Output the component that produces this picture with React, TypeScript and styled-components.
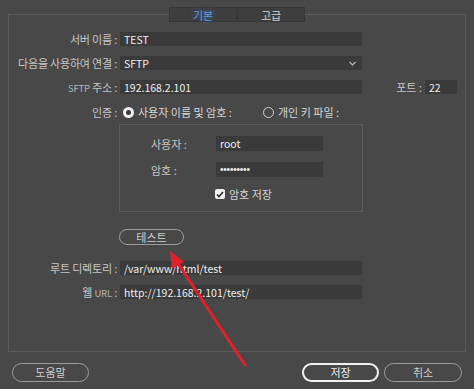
import styled, { createGlobalStyle } from 'styled-components'

const GlobalStyle = createGlobalStyle`
  html, body {
    margin: 0;
    padding: 0;
    background: #484848;
  }
  body {
    width: 474px;
    height: 389px;
    overflow: hidden;
    font-family: "Noto Sans CJK KR", "Noto Sans", sans-serif;
  }
`

const Dialog = styled.div`
  position: relative;
  width: 474px;
  height: 389px;
  box-sizing: border-box;
  padding: 14px 8px 0;
  color: #cbcbcb;
  font-size: 11px;
`

const Panel = styled.div`
  box-sizing: border-box;
  height: 338px;
  border: 1px solid #5c5c5c;
  display: flex;
  flex-direction: column;
`

const TabBar = styled.div`
  display: flex;
  justify-content: center;
  margin-top: -8px;
`

const Tab = styled.div<{ $active?: boolean }>`
  box-sizing: border-box;
  width: 68px;
  height: 15px;
  background: #3e3e3e;
  border: 1px solid #363636;
  display: flex;
  align-items: center;
  justify-content: center;
  font-size: 11px;
  color: ${p => (p.$active ? '#5b9be0' : '#d4d4d4')};
  text-shadow: ${p => (p.$active ? '0 0 6px rgba(70,140,230,0.7)' : 'none')};
`

const Row = styled.div<{ $mt: number }>`
  display: flex;
  align-items: center;
  height: 14px;
  margin-top: ${p => p.$mt}px;
`

const Label = styled.label`
  width: 108px;
  margin-right: 3px;
  text-align: right;
  white-space: nowrap;
  color: #c6c6c6;
  letter-spacing: -0.2px;
`

const Small = styled.span`
  font-size: 9.5px;
  color: #b4b4b4;
`

const Field = styled.input<{ $w?: number }>`
  box-sizing: border-box;
  width: ${p => p.$w ?? 242}px;
  height: 100%;
  border: none;
  outline: none;
  background: #3a3a3a;
  color: #efefef;
  font: inherit;
  font-size: 10.5px;
  padding: 0 4px;
`

const SelectBox = styled.div`
  box-sizing: border-box;
  width: 242px;
  height: 100%;
  background: #3a3a3a;
  color: #efefef;
  font-size: 10.5px;
  padding: 0 6px 0 4px;
  display: flex;
  align-items: center;
  justify-content: space-between;
`

const PortLabel = styled.label`
  margin-left: auto;
  margin-right: 3px;
  color: #c6c6c6;
`

const RadioGroup = styled.div`
  display: flex;
  align-items: center;
  margin-left: 3px;
`

const Option = styled.div<{ $w?: number }>`
  display: flex;
  align-items: center;
  gap: 4px;
  width: ${p => (p.$w ? `${p.$w}px` : 'auto')};
  color: #d6d6d6;
  white-space: nowrap;
`

const Radio = styled.span<{ $checked?: boolean }>`
  box-sizing: border-box;
  width: 11px;
  height: 11px;
  border-radius: 50%;
  border: ${p => (p.$checked ? '3px solid #f2f2f2' : '1px solid #cfcfcf')};
  background: ${p => (p.$checked ? '#3a3a3a' : 'transparent')};
`

const InnerBox = styled.div`
  box-sizing: border-box;
  width: 244px;
  height: 88px;
  margin: 5px 0 0 110px;
  border: 1px solid #5a5a5a;
  display: flex;
  flex-direction: column;
  padding-top: 11px;
`

const InnerRow = styled.div<{ $mt?: number }>`
  display: flex;
  align-items: center;
  height: 15px;
  padding-left: 31px;
  margin-top: ${p => p.$mt ?? 0}px;
`

const InnerLabel = styled.label`
  width: 65px;
  color: #c6c6c6;
`

const Dots = styled.div`
  box-sizing: border-box;
  width: 107px;
  height: 100%;
  background: #3a3a3a;
  color: #f2f2f2;
  font-family: "Liberation Sans", sans-serif;
  font-size: 10px;
  letter-spacing: -0.2px;
  padding-left: 4px;
  display: flex;
  align-items: center;
`

const CheckRow = styled.div`
  display: flex;
  align-items: center;
  gap: 4px;
  height: 12px;
  margin: 11px 0 0 95px;
  color: #d6d6d6;
`

const CheckBox = styled.span`
  width: 10px;
  height: 10px;
  border-radius: 2px;
  background: #f0f0f0;
  display: flex;
  align-items: center;
  justify-content: center;
`

const Pill = styled.button<{ $primary?: boolean; $w?: number; $h?: number }>`
  box-sizing: border-box;
  width: ${p => p.$w ?? 77}px;
  height: ${p => p.$h ?? 19}px;
  padding: 0;
  background: transparent;
  border: ${p => (p.$primary ? '2px solid #f0f0f0' : '1.5px solid #9c9c9c')};
  border-radius: 10px;
  color: ${p => (p.$primary ? '#f0f0f0' : '#cfcfcf')};
  font: inherit;
  font-size: 11px;
  line-height: 1;
`

const TestPill = styled(Pill)`
  margin: 17px 0 0 110px;
`

const Footer = styled.div`
  display: flex;
  justify-content: space-between;
  padding: 11px 4px 0;
`

const FooterRight = styled.div`
  display: flex;
  gap: 5px;
`

const ArrowLayer = styled.svg`
  position: absolute;
  left: 0;
  top: 0;
  pointer-events: none;
`

export default function App() {
  return (
    <>
      <GlobalStyle />
      <Dialog>
        <Panel>
          <TabBar>
            <Tab $active>기본</Tab>
            <Tab>고급</Tab>
          </TabBar>

          <Row $mt={10}>
            <Label>서버 이름 :</Label>
            <Field readOnly value="TEST" />
          </Row>
          <Row $mt={10}>
            <Label>다음을 사용하여 연결 :</Label>
            <SelectBox>
              <span>SFTP</span>
              <svg width="7" height="5" viewBox="0 0 7 5">
                <polyline points="0.5,1 3.5,4 6.5,1" fill="none" stroke="#bdbdbd" strokeWidth="1.2" />
              </svg>
            </SelectBox>
          </Row>
          <Row $mt={10}>
            <Label>
              <Small>SFTP</Small> 주소 :
            </Label>
            <Field readOnly value="192.168.2.101" />
            <PortLabel>포트 :</PortLabel>
            <Field $w={32} readOnly value="22" style={{ marginRight: 8 }} />
          </Row>

          <Row $mt={11}>
            <Label>인증 :</Label>
            <RadioGroup>
              <Option $w={140}>
                <Radio $checked />
                사용자 이름 및 암호 :
              </Option>
              <Option>
                <Radio />
                개인 키 파일 :
              </Option>
            </RadioGroup>
          </Row>

          <InnerBox>
            <InnerRow>
              <InnerLabel>사용자 :</InnerLabel>
              <Field $w={107} readOnly value="root" />
            </InnerRow>
            <InnerRow $mt={11}>
              <InnerLabel>암호 :</InnerLabel>
              <Dots>•••••••••</Dots>
            </InnerRow>
            <CheckRow>
              <CheckBox>
                <svg width="8" height="7" viewBox="0 0 8 7">
                  <polyline points="1,3.5 3,5.5 7,1" fill="none" stroke="#2e2e2e" strokeWidth="1.6" />
                </svg>
              </CheckBox>
              암호 저장
            </CheckRow>
          </InnerBox>

          <TestPill $w={65} $h={16}>테스트</TestPill>

          <Row $mt={16}>
            <Label>루트 디렉토리 :</Label>
            <Field readOnly value="/var/www/html/test" />
          </Row>
          <Row $mt={10}>
            <Label>
              웹 <Small>URL</Small> :
            </Label>
            <Field readOnly value="http://192.168.2.101/test/" />
          </Row>
        </Panel>

        <Footer>
          <Pill>도움말</Pill>
          <FooterRight>
            <Pill $primary>저장</Pill>
            <Pill $w={78}>취소</Pill>
          </FooterRight>
        </Footer>

        <ArrowLayer width="474" height="389" viewBox="0 0 474 389">
          <line x1="245" y1="365" x2="177" y2="262" stroke="#e3202b" strokeWidth="3" strokeLinecap="round" />
          <polygon points="170,251 184,262 172,269" fill="#e3202b" />
        </ArrowLayer>
      </Dialog>
    </>
  )
}
